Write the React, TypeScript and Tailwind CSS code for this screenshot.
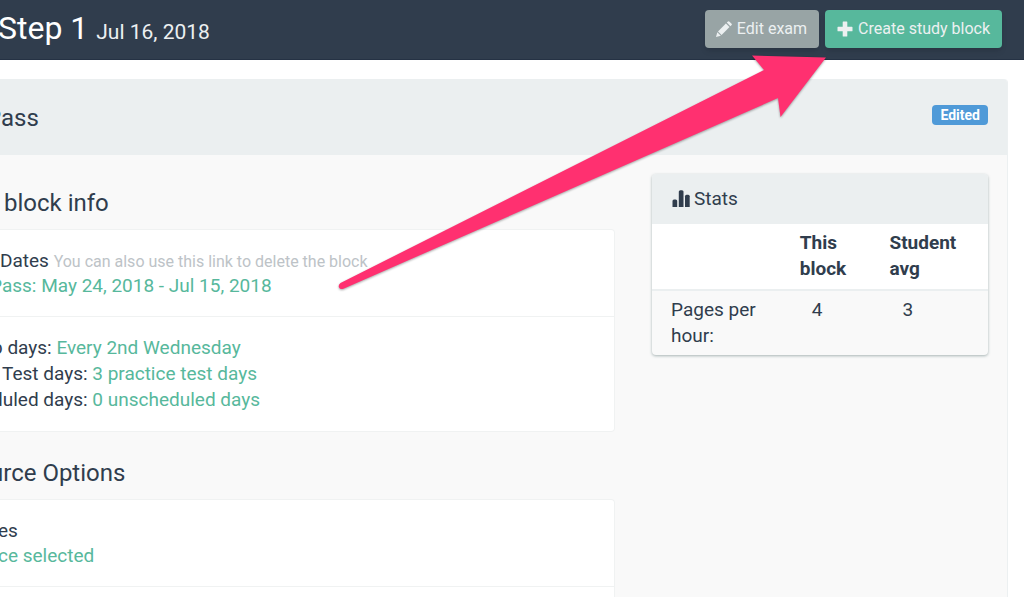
import type { ReactNode } from "react";

function PencilIcon() {
  return (
    <svg viewBox="0 0 16 16" className="h-4 w-4 shrink-0" fill="currentColor" aria-hidden="true">
      <path d="M0 16 1.3 11.2 4.8 14.7Z" />
      <path d="M2 10.4 9.9 2.5 13.5 6.1 5.6 14Z" />
      <path d="M10.8 1.6 12 .4Q12.6-.1 13.2.4L15.6 2.8Q16.1 3.4 15.6 4L14.4 5.2Z" />
    </svg>
  );
}

function PlusIcon() {
  return (
    <svg viewBox="0 0 16 16" className="h-4 w-4 shrink-0" fill="currentColor" aria-hidden="true">
      <path d="M5.700 1.1Q5.700.5 6.300.5H9.700Q10.300.5 10.300 1.1V5.700H14.900Q15.500 5.700 15.500 6.300V9.700Q15.500 10.300 14.900 10.300H10.300V14.900Q10.300 15.500 9.700 15.500H6.300Q5.700 15.500 5.700 14.900V10.300H1.100Q.5 10.300.5 9.700V6.300Q.5 5.700 1.100 5.700H5.700Z" />
    </svg>
  );
}

function StatsIcon() {
  return (
    <svg viewBox="0 0 18 18" className="h-[18px] w-[18px] shrink-0" fill="currentColor" aria-hidden="true">
      <path d="M.5 17V11Q.5 9.500 2 9.500H3.700Q5.200 9.500 5.200 11V17Z" />
      <path d="M6.800 17V1.700Q6.800.2 8.300.2H10Q11.500.2 11.500 1.700V17Z" />
      <path d="M13 17V6.200Q13 4.700 14.500 4.700H16.200Q17.700 4.700 17.700 6.200V17Z" />
    </svg>
  );
}

function GreenLink({ children }: { children: ReactNode }) {
  return (
    <a href="#" className="text-[#57b89c]">
      {children}
    </a>
  );
}

function SectionTitle({ children }: { children: ReactNode }) {
  return <h3 className="mb-[11px] text-2xl leading-[30px]">{children}</h3>;
}

function Arrow() {
  return (
    <svg
      viewBox="0 0 500 245"
      className="pointer-events-none absolute left-[332px] top-[50px] h-[245px] w-[500px] drop-shadow-[0_1px_1px_rgba(0,0,0,0.35)]"
      fill="#ff3070"
      aria-hidden="true"
    >
      <path d="M494 7.5 420 5.5 432 20 8.500 233Q6 235 7 237.500 8.500 240 12 238.500L446 48 448.500 67Z" />
    </svg>
  );
}

export default function App() {
  return (
    <div className="relative flex min-h-screen flex-col overflow-hidden bg-white font-['Roboto',sans-serif] text-[19px] text-[#303d4d]">
      <header className="flex h-[60px] items-start justify-between border-b border-[#253244] bg-[#303d4d] pr-[22px] pt-2.5 text-white">
        <h1 className="-ml-0.5 text-[32px] leading-9">
          Step 1 <small className="text-[21px] text-[#ecf0f1]">Jul 16, 2018</small>
        </h1>
        <div className="flex gap-1.5 text-base">
          <button className="flex h-[38px] items-center gap-[5px] rounded bg-[#98a4a5] pl-[11px] pr-3 text-[#ecf0f1] shadow-md">
            <PencilIcon />
            Edit exam
          </button>
          <button className="flex h-[38px] items-center gap-[5px] rounded bg-[#57b89c] pl-3 pr-3 text-[#ecf0f1] shadow-md">
            <PlusIcon />
            Create study block
          </button>
        </div>
      </header>

      <main className="mr-4 mt-[19px] flex flex-1 flex-col rounded-tr border-r border-[#ecf0f1] bg-[#f9f9f9]">
        <div className="flex h-[76px] items-start justify-between rounded-tr bg-[#ebeff0] pr-[19px] pt-[26px]">
          <h2 className="-ml-3.5 text-2xl leading-[26px]">Pass</h2>
          <span className="rounded bg-[#4f9ad8] px-2 text-sm leading-5 font-bold text-white">Edited</span>
        </div>

        <div className="grid flex-1 grid-cols-[minmax(0,615fr)_minmax(0,336fr)] gap-[37px] pr-[19px] pt-[19px]">
          <div className="flex flex-col pt-3.5">
            <section className="mb-[26px]">
              <div className="pl-1">
                <SectionTitle>block info</SectionTitle>
              </div>
              <div className="rounded-r border-y border-r border-[#f0f2f2] bg-white">
                <div className="border-b border-[#f0f2f2] py-[18px] leading-[25px]">
                  <div>
                    Dates <small className="text-base leading-none text-[#bdc3c7]">You can also use this link to delete the block</small>
                  </div>
                  <div className="-ml-2.5">
                    <GreenLink>Pass: May 24, 2018 - Jul 15, 2018</GreenLink>
                  </div>
                </div>
                <div className="py-[18px] leading-[26px]">
                  <div className="-ml-2">
                    p days: <GreenLink>Every 2nd Wednesday</GreenLink>
                  </div>
                  <div className="pl-0.5">
                    Test days: <GreenLink>3 practice test days</GreenLink>
                  </div>
                  <div className="-ml-2">
                    duled days: <GreenLink>0 unscheduled days</GreenLink>
                  </div>
                </div>
              </div>
            </section>

            <section className="flex flex-1 flex-col">
              <div className="-ml-2.5">
                <SectionTitle>urce Options</SectionTitle>
              </div>
              <div className="flex-1 rounded-tr border-r border-t border-[#f0f2f2] bg-white">
                <div className="border-b border-[#f0f2f2] py-[18px] leading-[25px]">
                  <div className="-ml-0.5">es</div>
                  <div className="-ml-0.5">
                    <GreenLink>ce selected</GreenLink>
                  </div>
                </div>
              </div>
            </section>
          </div>

          <aside className="self-start overflow-hidden rounded bg-[#f9f9f9] shadow-[0_1px_3px_rgba(48,80,80,0.4)]">
            <h3 className="flex h-[50px] items-center gap-1 bg-[#ebeff0] px-5">
              <StatsIcon />
              Stats
            </h3>
            <table className="w-full table-fixed text-left leading-[26px]">
              <thead>
                <tr className="border-b-2 border-[#ebeff0] bg-white align-top">
                  <td className="w-[41%]" />
                  <th scope="col" className="w-[27%] pb-[7px] pl-2.5 pr-6 pt-1.5 font-bold">
                    This block
                  </th>
                  <th scope="col" className="w-[32%] pb-[7px] pl-[9px] pt-1.5 font-bold">
                    Student avg
                  </th>
                </tr>
              </thead>
              <tbody>
                <tr className="align-top">
                  <th scope="row" className="pb-1.5 pl-[19px] pr-6 pt-1.5 font-normal">
                    Pages per hour:
                  </th>
                  <td className="pb-1.5 pl-[22px] pt-1.5">4</td>
                  <td className="pb-1.5 pl-[22px] pt-1.5">3</td>
                </tr>
              </tbody>
            </table>
          </aside>
        </div>
      </main>
      <Arrow />
    </div>
  );
}
